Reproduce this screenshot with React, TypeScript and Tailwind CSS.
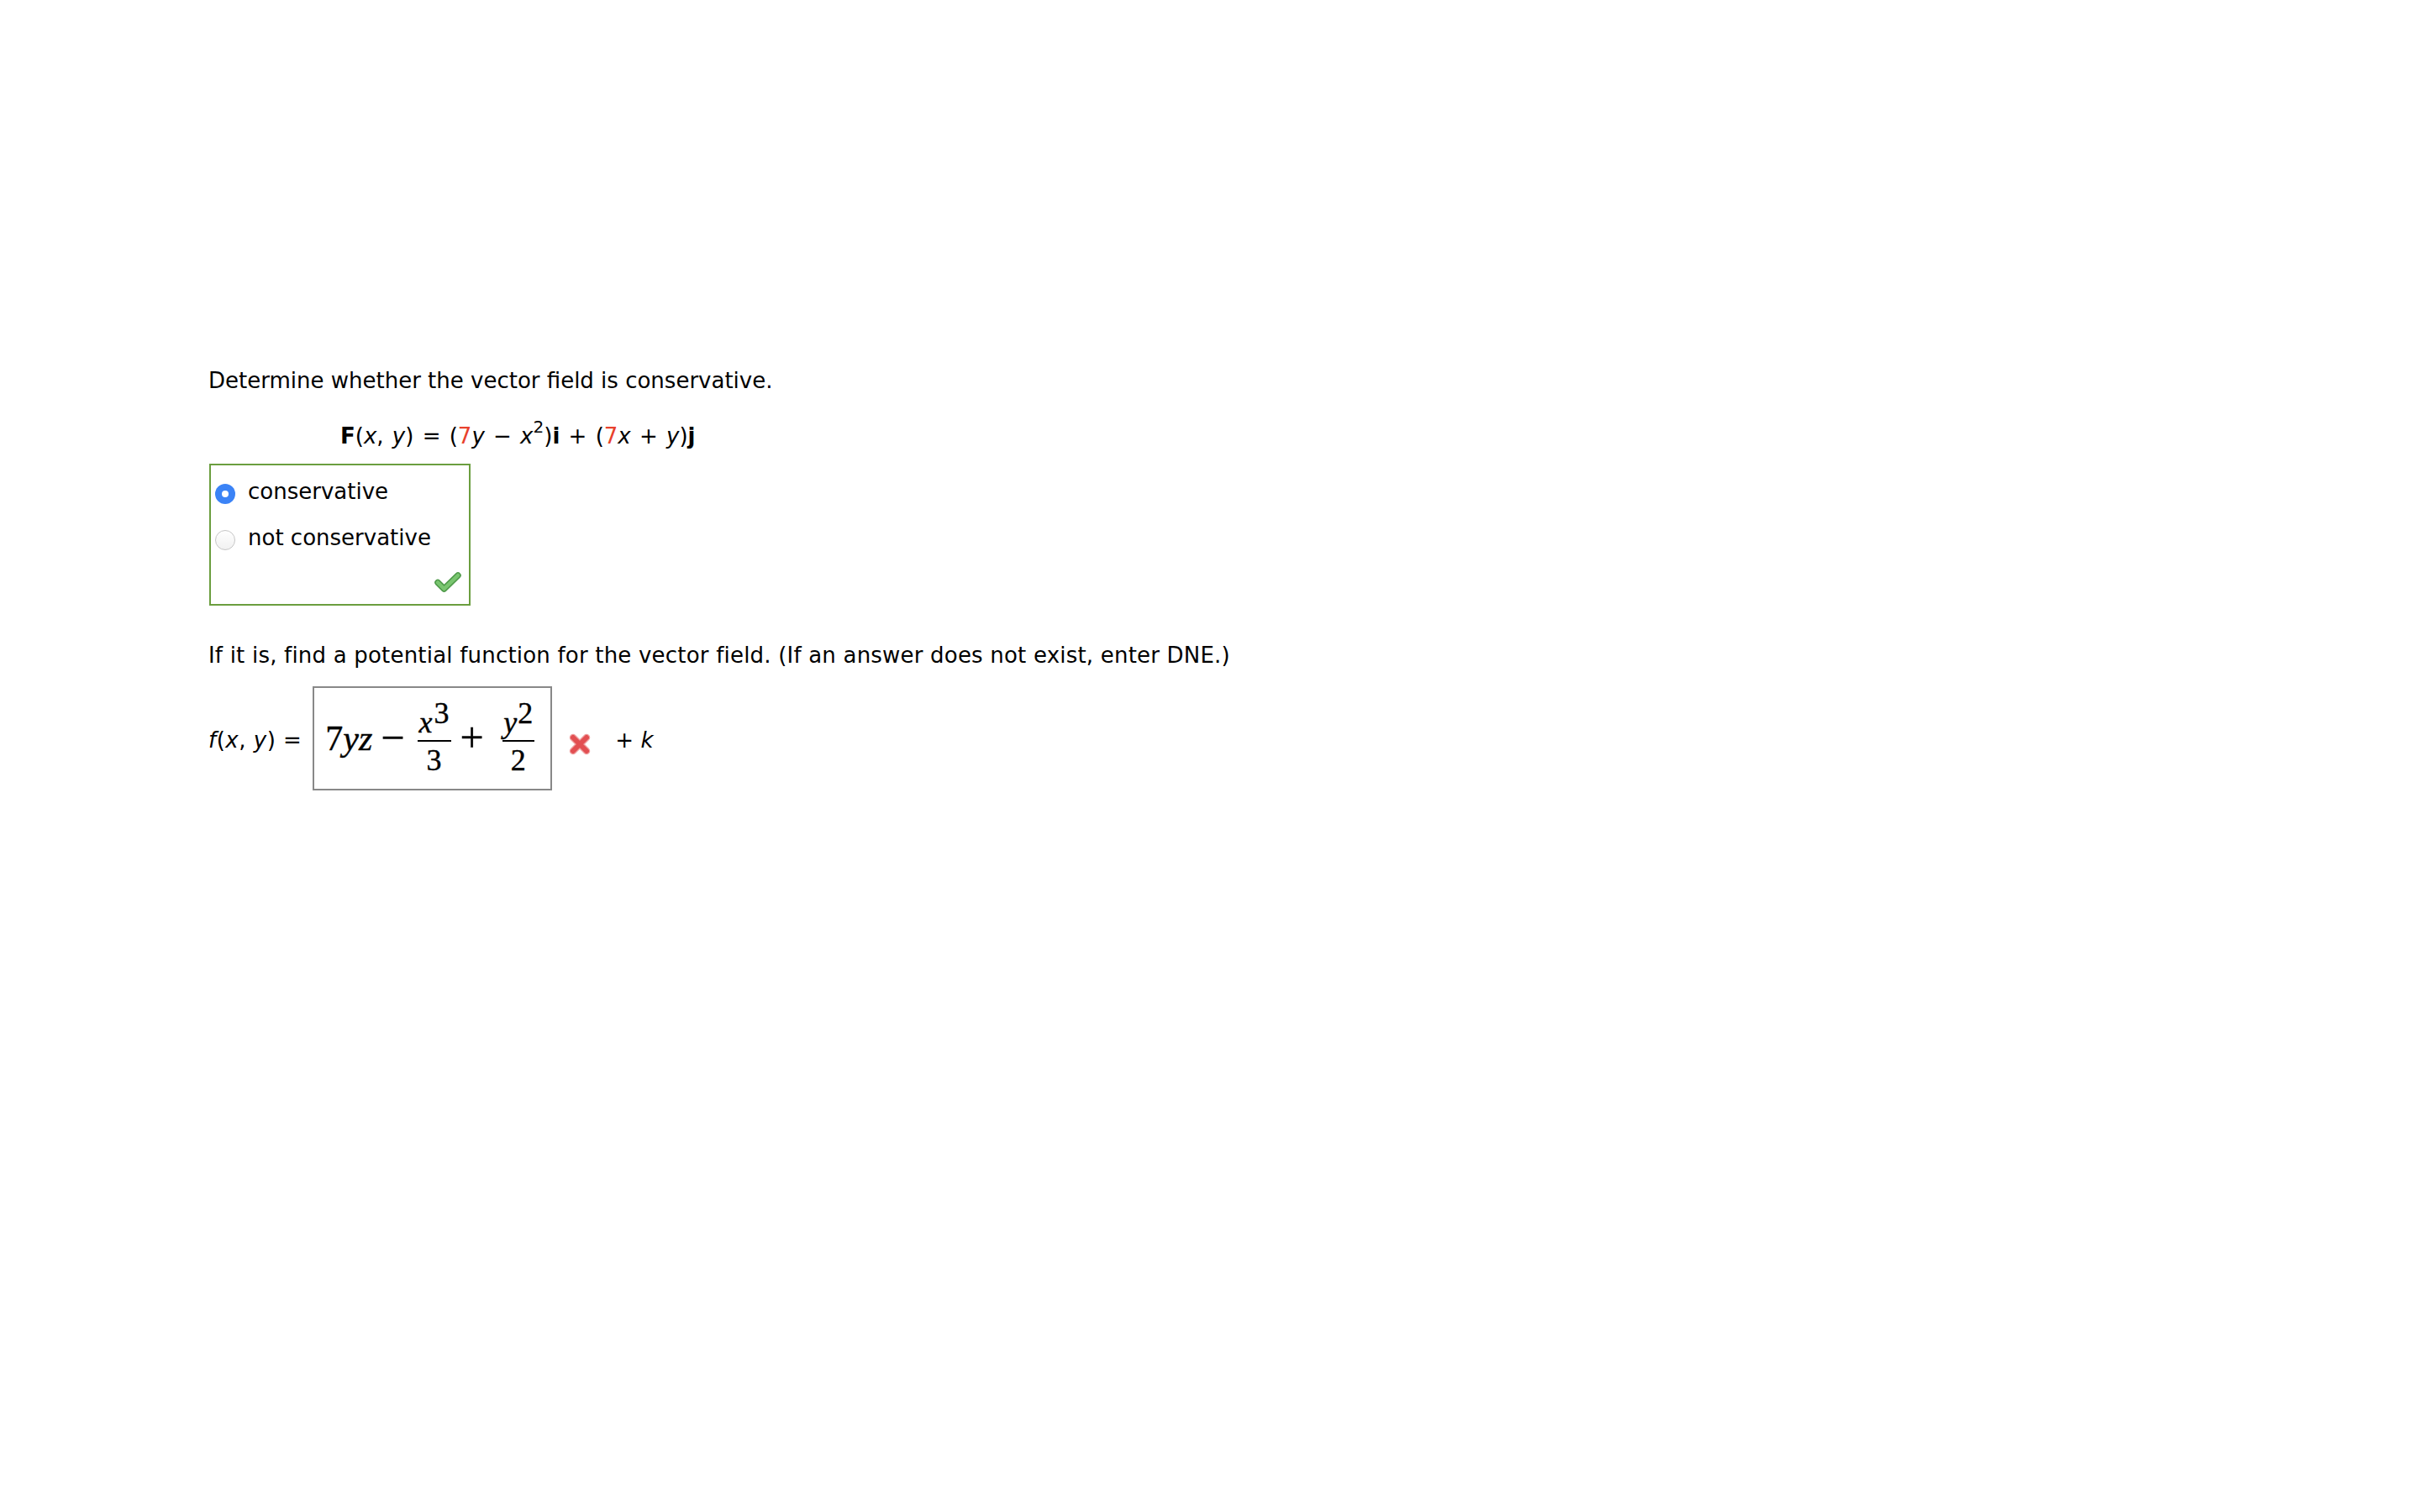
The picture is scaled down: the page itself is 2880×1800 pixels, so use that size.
import type { ReactNode } from 'react'

function Radio({ checked }: { checked?: boolean }) {
  if (checked) {
    return (
      <span className="mt-[5px] flex h-[24px] w-[24px] shrink-0 items-center justify-center rounded-full bg-[#3b83f6]">
        <span className="h-[8px] w-[8px] rounded-full bg-white" />
      </span>
    )
  }
  return (
    <span className="mt-[5px] h-[24px] w-[24px] shrink-0 rounded-full border border-[#c6c6c6] bg-gradient-to-b from-white to-[#f1f1f1]" />
  )
}

function CheckMark() {
  return (
    <svg width="32" height="24" viewBox="0 0 32 24" fill="none">
      <path d="M4 12.5 L11.5 20 L28 4" stroke="#4f9a4a" strokeWidth="7.5" strokeLinecap="round" strokeLinejoin="round" />
      <path d="M4 12.5 L11.5 20 L28 4" stroke="#79c56f" strokeWidth="4.5" strokeLinecap="round" strokeLinejoin="round" />
    </svg>
  )
}

function CrossMark() {
  return (
    <svg width="28" height="28" viewBox="0 0 28 28" fill="none">
      <path d="M6 6 L22 22 M22 6 L6 22" stroke="#f0a3a3" strokeWidth="8.5" strokeLinecap="round" />
      <path d="M6 6 L22 22 M22 6 L6 22" stroke="#e24f52" strokeWidth="6" strokeLinecap="round" />
    </svg>
  )
}

function Frac({ num, den, className = '' }: { num: ReactNode; den: ReactNode; className?: string }) {
  return (
    <span className={`flex flex-col items-center text-[36px] ${className}`}>
      <span className="pb-[3px] leading-[36px]">{num}</span>
      <span className="h-[2px] w-full bg-black" />
      <span className="pt-[4px] leading-[36px]">{den}</span>
    </span>
  )
}

export default function App() {
  const red = 'text-[#e8412c]'

  return (
    <div className="min-h-screen bg-white pl-[248px] pt-[437px] font-['DejaVu_Sans',Verdana,sans-serif] text-[26px] leading-[32px] text-black">
      <p>Determine whether the vector field is conservative.</p>

      <p className="ml-[157px] mt-[34px] [word-spacing:2px]">
        <b>F</b>(<i>x</i>, <i>y</i>) = (<span className={red}>7</span>
        <i>y</i> − <i>x</i>
        <span className="align-[13px] text-[20px] leading-[0]">2</span>)<b>i</b> + (
        <span className={red}>7</span>
        <i>x</i> + <i>y</i>)<b>j</b>
      </p>

      <div className="ml-[1px] mt-[17px] flex h-[169px] w-[311px] flex-col border-2 border-[#6b9e3f] pt-[4px]">
        <label className="flex h-[55px] items-center gap-[15px] pl-[5px] leading-[55px]">
          <Radio checked />
          <span>conservative</span>
        </label>
        <label className="flex h-[55px] items-center gap-[15px] pl-[5px] leading-[55px]">
          <Radio />
          <span>not conservative</span>
        </label>
        <div className="flex justify-end pr-[9px] pt-[13px]">
          <CheckMark />
        </div>
      </div>

      <p className="mt-[43px] tracking-[0.2px]">
        If it is, find a potential function for the vector field. (If an answer does not exist, enter DNE.)
      </p>

      <div className="mt-[21px] flex items-center">
        <span className="pt-[4px] tracking-[0.5px]">
          <i>f</i>(<i>x</i>, <i>y</i>) =
        </span>
        <div className="ml-[13px] flex h-[124px] w-[285px] shrink-0 items-center border-2 border-[#888888] pl-[13px] pt-[6px] font-['Liberation_Serif','Times_New_Roman',serif] [-webkit-text-stroke:0.4px_#000]">
          <span className="pb-[6px] text-[42px] leading-[42px]">
            7<i>yz</i>
          </span>
          <span className="ml-[10px] pb-[8px] text-[50px] leading-[50px]">−</span>
          <Frac
            className="ml-[15px] w-[40px]"
            num={
              <>
                <i>x</i>
                <span className="ml-[2px] align-[11px] leading-[0]">3</span>
              </>
            }
            den="3"
          />
          <span className="ml-[11px] pb-[8px] text-[50px] leading-[50px]">+</span>
          <Frac
            className="ml-[22px] w-[38px]"
            num={
              <>
                <i>y</i>
                <span className="ml-[1px] align-[11px] leading-[0]">2</span>
              </>
            }
            den="2"
          />
        </div>
        <span className="ml-[19px] mt-[14px] flex">
          <CrossMark />
        </span>
        <span className="ml-[28px] pt-[4px]">
          + <i>k</i>
        </span>
      </div>
    </div>
  )
}
